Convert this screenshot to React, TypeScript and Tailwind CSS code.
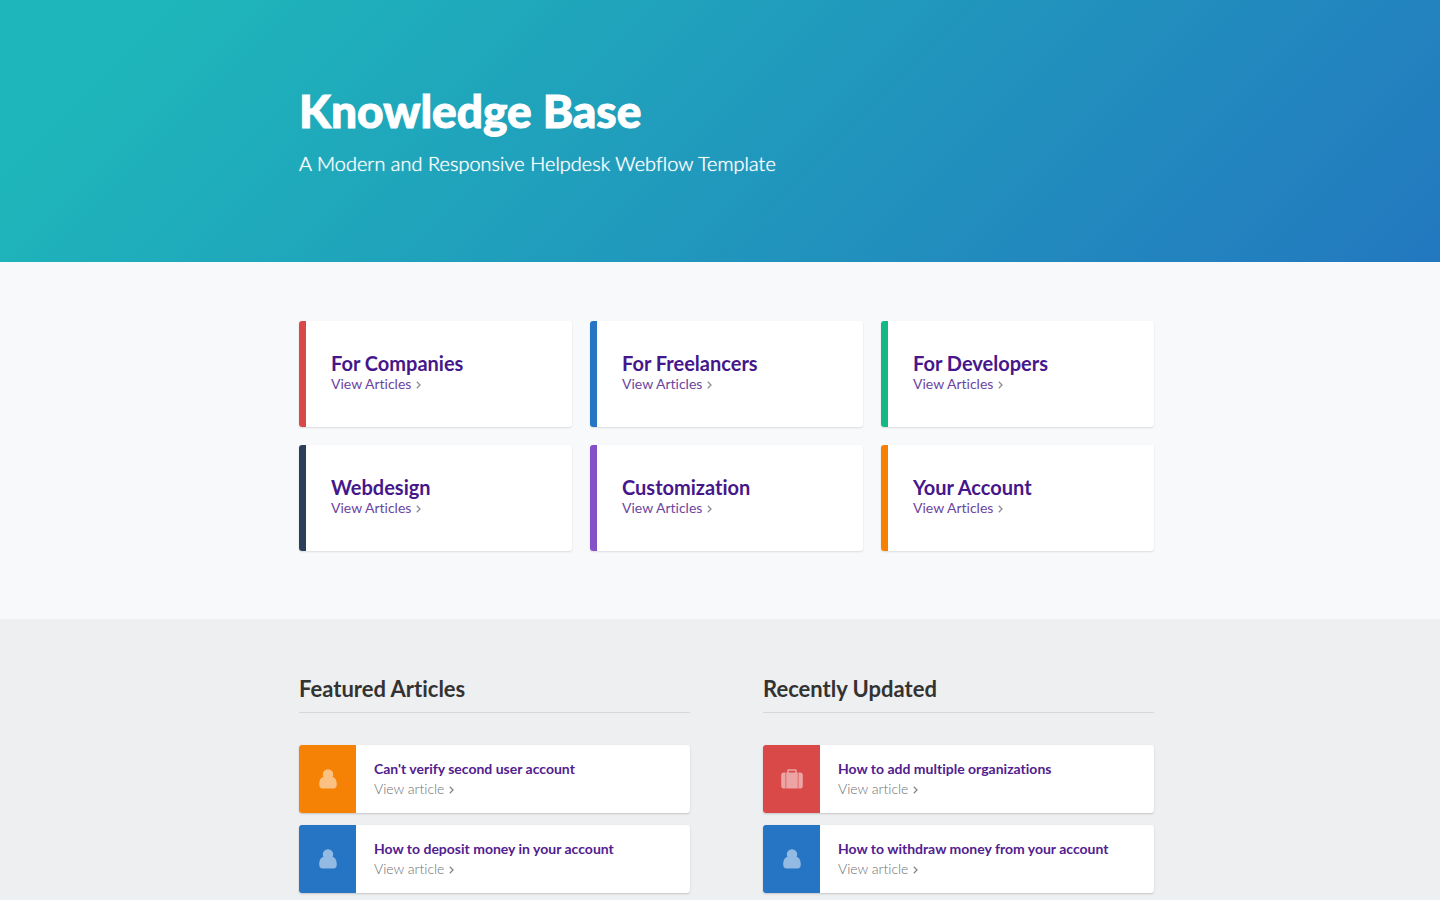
import React from "react";

const categories = [
  { title: "For Companies", bar: "bg-[#d94948]" },
  { title: "For Freelancers", bar: "bg-[#2575c4]" },
  { title: "For Developers", bar: "bg-[#12b886]" },
  { title: "Webdesign", bar: "bg-[#2d3e5a]" },
  { title: "Customization", bar: "bg-[#8450c8]" },
  { title: "Your Account", bar: "bg-[#f78000]" },
];

const columns = [
  {
    heading: "Featured Articles",
    articles: [
      { title: "Can't verify second user account", color: "bg-[#f58205]", icon: "user" },
      { title: "How to deposit money in your account", color: "bg-[#2575c4]", icon: "user" },
    ],
  },
  {
    heading: "Recently Updated",
    articles: [
      { title: "How to add multiple organizations", color: "bg-[#d94948]", icon: "case" },
      { title: "How to withdraw money from your account", color: "bg-[#2575c4]", icon: "user" },
    ],
  },
];

function Chevron() {
  return (
    <svg viewBox="0 0 5 8" className="mt-0.5 h-2 w-[5px]" fill="none" stroke="currentColor" strokeWidth="1.3" aria-hidden="true">
      <path d="M0.8 0.8 4 4 0.8 7.2" />
    </svg>
  );
}

function UserIcon() {
  return (
    <svg viewBox="0 0 18 20" className="h-5 w-[18px]" fill="currentColor" aria-hidden="true">
      <path d="M9 0.200a5.200 5.200 0 0 1 4.500 7.800C16.300 8.300 17.800 11.500 17.800 15.600c0 2.600-1.300 4-3.500 4H3.700c-2.200 0-3.500-1.400-3.500-4C0.200 11.500 1.700 8.300 4.500 8A5.200 5.200 0 0 1 9 0.200Z" />
    </svg>
  );
}

function SuitcaseIcon() {
  return (
    <svg viewBox="0 0 22 20" className="h-5 w-[22px]" fill="currentColor" aria-hidden="true">
      <path d="M3 3.400h1.600v16.200H3A2.800 2.800 0 0 1 0.200 16.800V6.200A2.800 2.800 0 0 1 3 3.400Z" />
      <path d="M19 3.400h-1.600v16.200H19a2.800 2.800 0 0 0 2.800-2.800V6.200A2.800 2.800 0 0 0 19 3.400Z" />
      <path fillRule="evenodd" d="M5.200 3.400h1V1.600C6.200 0.800 6.700 0.300 7.500 0.300h7c0.800 0 1.300 0.500 1.300 1.300v1.800h1v16.200H5.200ZM7.700 1.800v1.600h6.600V1.800Z" />
    </svg>
  );
}

export default function App() {
  return (
    <div className="min-h-screen bg-[#f8f9fb] font-['Lato',sans-serif] [font-variant-ligatures:none]">
      <header className="bg-[linear-gradient(135deg,#1eb6ba_10%,#2378bf)] pt-[86px] pb-[85px] pl-[13px]">
        <div className="mx-auto max-w-[855px] text-white">
          <h1 className="text-[46px] leading-[50px] font-black [-webkit-text-stroke:1px_white]">Knowledge Base</h1>
          <p className="mt-[13px] text-[20px] leading-7 font-light [text-shadow:0_0_1px_white]">A Modern and Responsive Helpdesk Webflow Template</p>
        </div>
      </header>
      <main>
        <section className="pt-[59px] pb-[68px] pl-[13px]">
          <div className="mx-auto grid max-w-[855px] grid-cols-3 gap-[18px]">
            {categories.map((c) => (
              <a key={c.title} href="#" className="flex h-[106px] overflow-hidden rounded-[3px] bg-white shadow-[0_1px_2px_rgba(0,0,0,0.12)]">
                <span className={`w-[7px] ${c.bar}`} />
                <span className="flex flex-col pt-[30px] pl-[25px]">
                  <span className="text-[20px] leading-6 font-bold text-[#46178b]">{c.title}</span>
                  <span className="flex items-center gap-[5px] text-sm leading-[18px] text-[#6b45a1]">
                    View Articles
                    <span className="text-[#8d8d98]"><Chevron /></span>
                  </span>
                </span>
              </a>
            ))}
          </div>
        </section>
        <section className="bg-[#edeff0] pt-[56px] pb-[7px] pl-[13px]">
          <div className="mx-auto grid max-w-[855px] grid-cols-2 gap-[73px]">
            {columns.map((col) => (
              <div key={col.heading}>
                <h2 className="border-b border-[#d5d7d9] pb-[9px] text-[22px] leading-7 font-bold text-[#333]">{col.heading}</h2>
                <ul className="mt-8 flex flex-col gap-3">
                  {col.articles.map((a) => (
                    <li key={a.title}>
                      <a href="#" className="flex h-[68px] overflow-hidden rounded-[3px] bg-white shadow-[0_1px_2px_rgba(0,0,0,0.18)]">
                        <span className={`flex w-[57px] items-center justify-center text-white/50 ${a.color}`}>
                          {a.icon === "user" ? <UserIcon /> : <SuitcaseIcon />}
                        </span>
                        <span className="flex flex-col pt-[14px] pl-[18px]">
                          <span className="text-sm leading-5 font-bold text-[#52208f]">{a.title}</span>
                          <span className="flex items-center gap-[5px] text-sm leading-5 font-light text-[#6c7073]">
                            View article
                            <span className="text-[#85888b]"><Chevron /></span>
                          </span>
                        </span>
                      </a>
                    </li>
                  ))}
                </ul>
              </div>
            ))}
          </div>
        </section>
      </main>
    </div>
  );
}
